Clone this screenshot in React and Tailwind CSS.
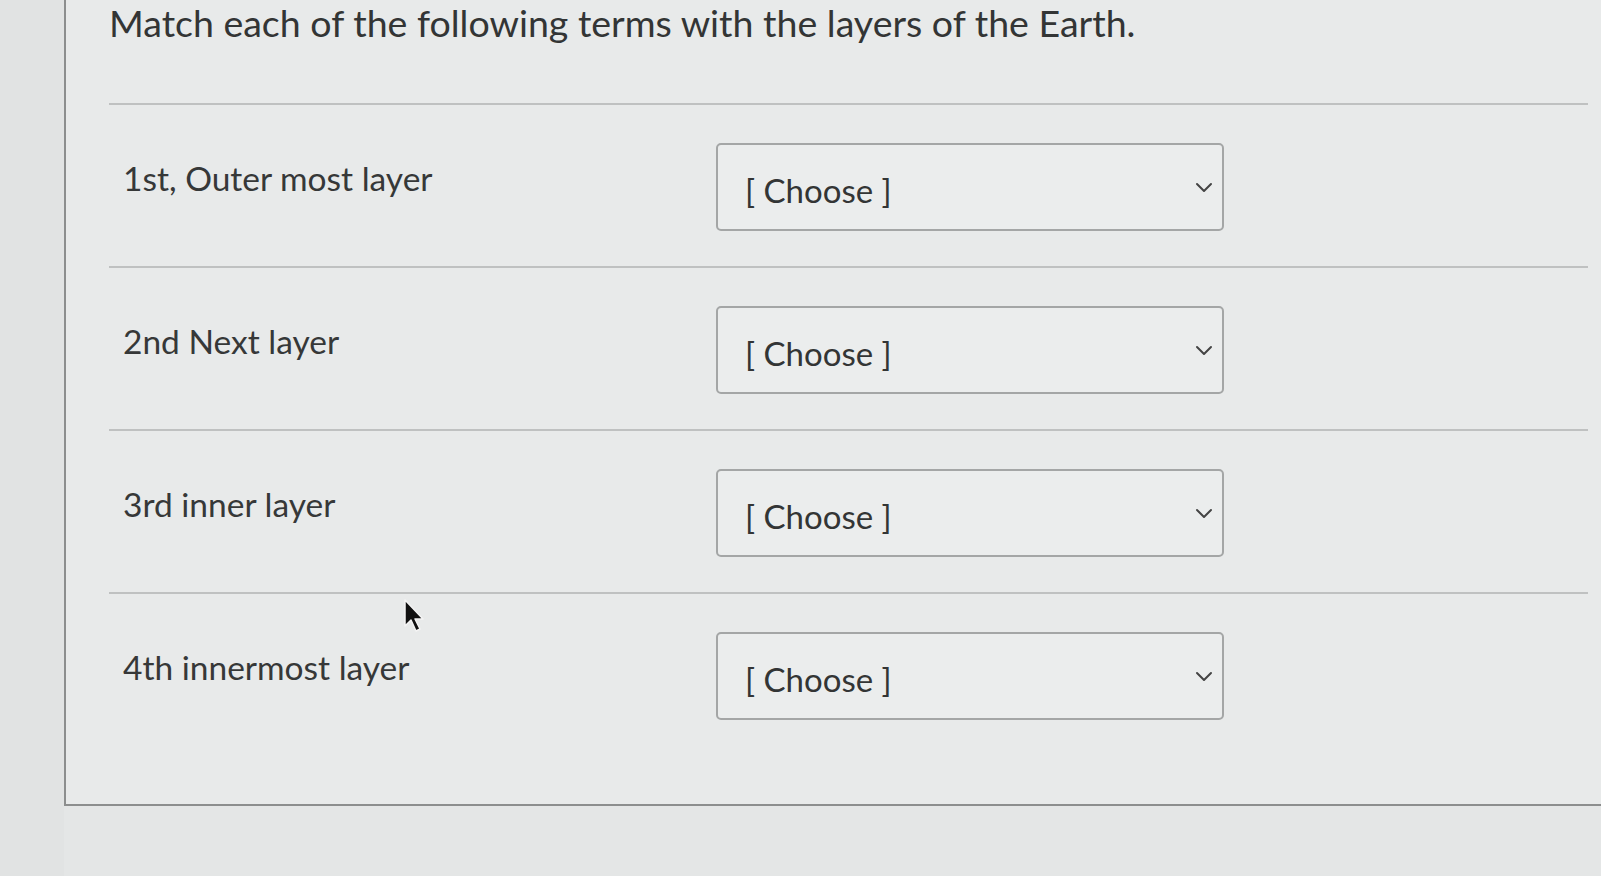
import React from "react";

const rows = [
  { label: "1st, Outer most layer" },
  { label: "2nd Next layer" },
  { label: "3rd inner layer" },
  { label: "4th innermost layer" },
];

function Chevron() {
  return (
    <svg width="18" height="11" viewBox="0 0 18 11" fill="none" className="shrink-0">
      <path d="M2 2 L9 9 L16 2" stroke="#444" strokeWidth="2" strokeLinecap="round" strokeLinejoin="round" />
    </svg>
  );
}

function Cursor() {
  return (
    <svg width="24" height="36" viewBox="0 0 24 36" className="absolute left-[403px] top-[598px]">
      <path d="M2 2 L2 28 L8 22 L13 33 L17 31 L12 21 L20 21 Z" fill="#111" stroke="#f4f4f4" strokeWidth="1.5" strokeLinejoin="round" />
    </svg>
  );
}

export default function App() {
  return (
    <div className="relative w-full h-[876px] overflow-hidden bg-[#e4e6e6] flex" style={{ fontFamily: "Lato, 'Open Sans', sans-serif" }}>
      <div className="w-[64px] shrink-0 bg-[#e1e3e3]" />
      <div className="flex-1 flex flex-col">
        <div className="h-[806px] border-l-2 border-b-2 border-[#8c8e8e] bg-[#e8eaea] pl-[43px] pr-[13px] flex flex-col">
          <h1 className="text-[37.5px] leading-[44px] text-[#333535] pt-[1px] h-[104px] font-normal whitespace-nowrap">
            Match each of the following terms with the layers of the Earth.
          </h1>
          <div className="flex flex-col">
            {rows.map((r, i) => (
              <div key={i} className={`border-t-2 border-[#bfc1c1] flex items-start ${i === 3 ? "h-[212px]" : "h-[163px]"}`}>
                <div className="w-[607px] pl-[14px] pt-[53px] text-[33.5px] leading-[40px] text-[#363838] whitespace-nowrap">
                  {r.label}
                </div>
                <div className="mt-[38px] w-[508px] h-[88px] border-2 border-[#a4a6a6] rounded-[5px] bg-[#ebeded] flex items-center justify-between pl-[27px] pr-[9px]">
                  <span className="text-[33px] leading-[40px] text-[#333535] pt-[6px]">[ Choose ]</span>
                  <Chevron />
                </div>
              </div>
            ))}
          </div>
        </div>
      </div>
      <Cursor />
    </div>
  );
}
